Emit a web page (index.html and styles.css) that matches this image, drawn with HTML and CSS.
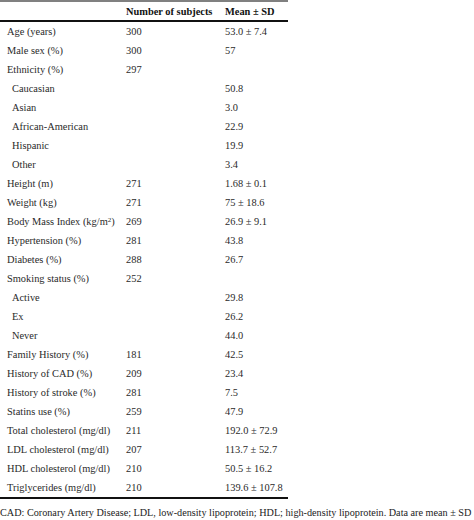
FILE: index.html
```html
<!DOCTYPE html>
<html>
<head>
<meta charset="utf-8">
<link rel="stylesheet" href="styles.css">
</head>
<body>
<div class="wrap">
<table class="tbl">
<thead>
<tr><th class="c1"></th><th class="c2">Number of subjects</th><th class="c3">Mean ± SD</th></tr>
</thead>
<tbody>
<tr><td class="c1">Age (years)</td><td class="c2">300</td><td class="c3">53.0 ± 7.4</td></tr>
<tr><td class="c1">Male sex (%)</td><td class="c2">300</td><td class="c3">57</td></tr>
<tr><td class="c1">Ethnicity (%)</td><td class="c2">297</td><td class="c3"></td></tr>
<tr><td class="c1 sub">Caucasian</td><td class="c2"></td><td class="c3">50.8</td></tr>
<tr><td class="c1 sub">Asian</td><td class="c2"></td><td class="c3">3.0</td></tr>
<tr><td class="c1 sub">African-American</td><td class="c2"></td><td class="c3">22.9</td></tr>
<tr><td class="c1 sub">Hispanic</td><td class="c2"></td><td class="c3">19.9</td></tr>
<tr><td class="c1 sub">Other</td><td class="c2"></td><td class="c3">3.4</td></tr>
<tr><td class="c1">Height (m)</td><td class="c2">271</td><td class="c3">1.68 ± 0.1</td></tr>
<tr><td class="c1">Weight (kg)</td><td class="c2">271</td><td class="c3">75 ± 18.6</td></tr>
<tr><td class="c1">Body Mass Index (kg/m<sup>2</sup>)</td><td class="c2">269</td><td class="c3">26.9 ± 9.1</td></tr>
<tr><td class="c1">Hypertension (%)</td><td class="c2">281</td><td class="c3">43.8</td></tr>
<tr><td class="c1">Diabetes (%)</td><td class="c2">288</td><td class="c3">26.7</td></tr>
<tr><td class="c1">Smoking status (%)</td><td class="c2">252</td><td class="c3"></td></tr>
<tr><td class="c1 sub">Active</td><td class="c2"></td><td class="c3">29.8</td></tr>
<tr><td class="c1 sub">Ex</td><td class="c2"></td><td class="c3">26.2</td></tr>
<tr><td class="c1 sub">Never</td><td class="c2"></td><td class="c3">44.0</td></tr>
<tr><td class="c1">Family History (%)</td><td class="c2">181</td><td class="c3">42.5</td></tr>
<tr><td class="c1">History of CAD (%)</td><td class="c2">209</td><td class="c3">23.4</td></tr>
<tr><td class="c1">History of stroke (%)</td><td class="c2">281</td><td class="c3">7.5</td></tr>
<tr><td class="c1">Statins use (%)</td><td class="c2">259</td><td class="c3">47.9</td></tr>
<tr><td class="c1">Total cholesterol (mg/dl)</td><td class="c2">211</td><td class="c3">192.0 ± 72.9</td></tr>
<tr><td class="c1">LDL cholesterol (mg/dl)</td><td class="c2">207</td><td class="c3">113.7 ± 52.7</td></tr>
<tr><td class="c1">HDL cholesterol (mg/dl)</td><td class="c2">210</td><td class="c3">50.5 ± 16.2</td></tr>
<tr><td class="c1">Triglycerides (mg/dl)</td><td class="c2">210</td><td class="c3">139.6 ± 107.8</td></tr>
</tbody>
</table>
<p class="note">CAD: Coronary Artery Disease; LDL, low-density lipoprotein; HDL; high-density lipoprotein. Data are mean ± SD</p>
</div>
</body>
</html>
```
FILE: styles.css
```css
html, body {
  margin: 0;
  padding: 0;
  background: #fff;
}
body, table, th, td, p {
  font-family: "Liberation Serif", "DejaVu Serif", serif;
}
body {
  font-size: 10.4px;
  color: #2a2a2a;
  overflow: hidden;
}
.wrap {
  width: 474px;
}
.tbl {
  width: 288px;
  border-collapse: collapse;
  table-layout: fixed;
  border-top: 2px solid #808080;
  border-bottom: 2px solid #111;
  font-size: 10.4px;
}
.tbl thead th {
  font-weight: bold;
  color: #111;
  text-align: left;
  height: 18px;
  padding: 0;
  vertical-align: middle;
  border-bottom: 2px solid #111;
}
.tbl td {
  height: 18px;
  padding: 1px 0 0 0;
  text-align: left;
  vertical-align: middle;
  white-space: nowrap;
  line-height: 12px;
}
.c1 { width: 126px; padding-left: 7px !important; box-sizing: border-box; }
.c2 { width: 99px; }
.c3 { width: 63px; }
.sub { padding-left: 12px !important; }
sup {
  font-size: 7px;
  line-height: 0;
  vertical-align: 3px;
}
.note {
  margin: 8px 0 0 0;
  white-space: nowrap;
  color: #222;
  font-size: 10.2px;
  line-height: 12px;
}
```
